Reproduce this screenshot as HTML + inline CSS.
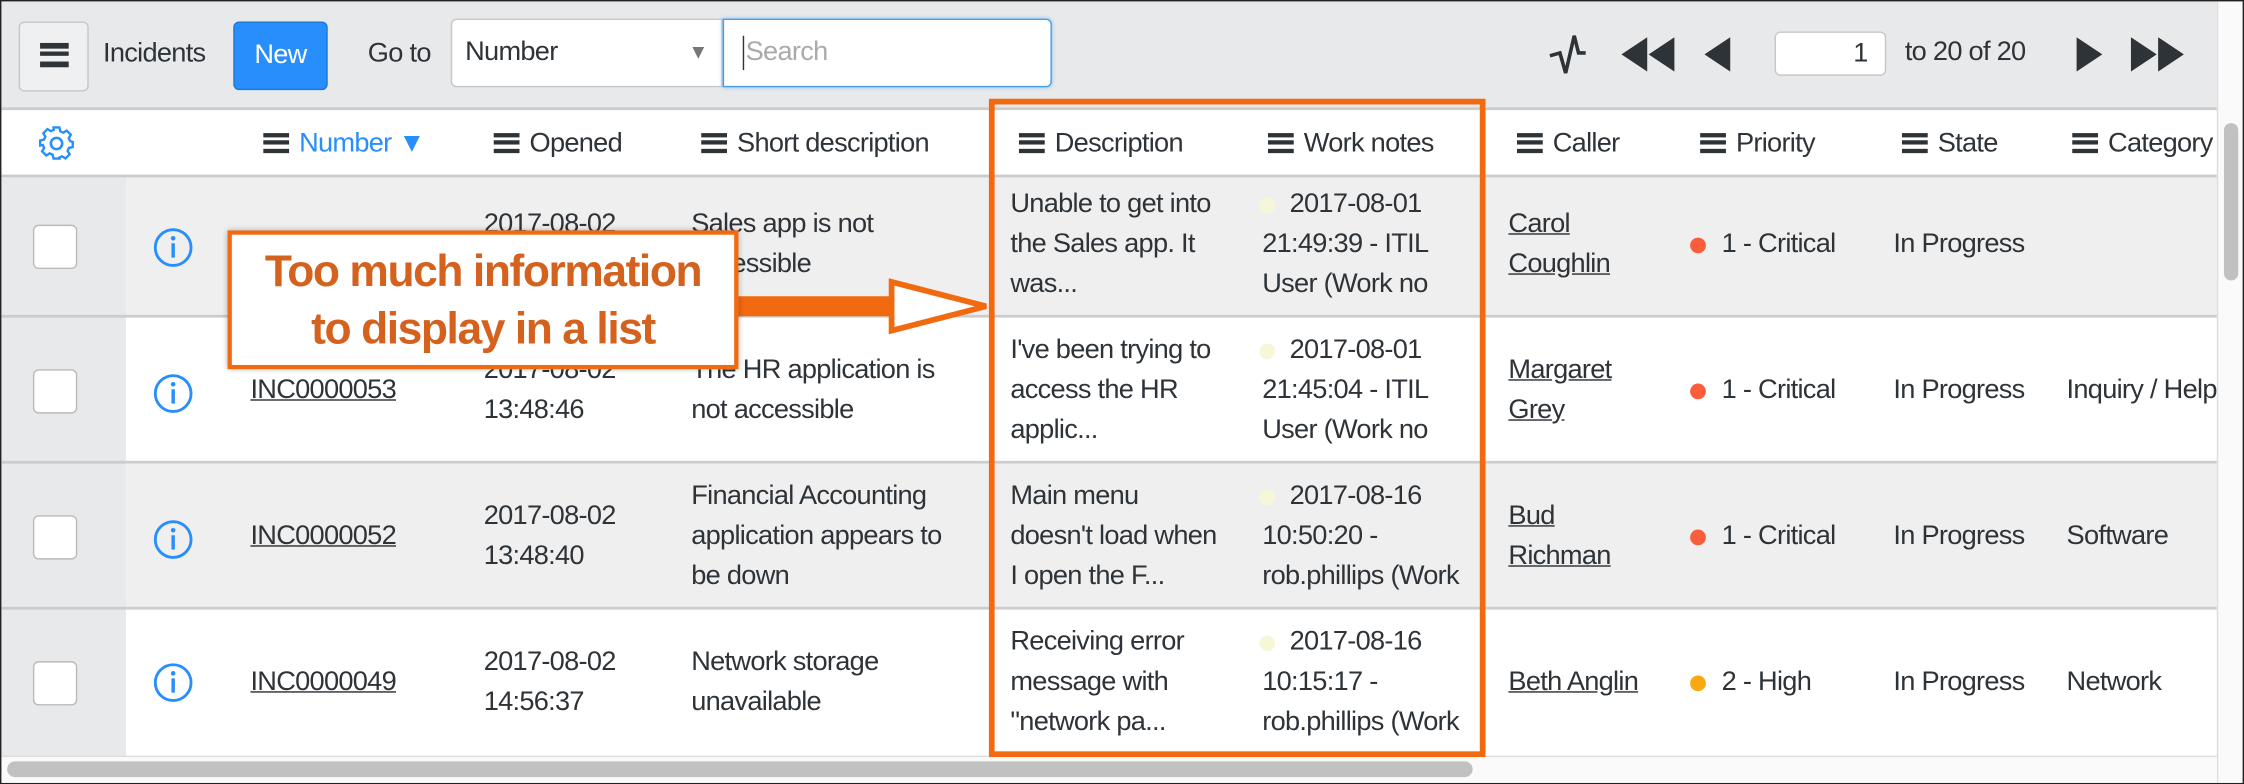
<!DOCTYPE html>
<html><head><meta charset="utf-8"><style>
html,body{margin:0;padding:0;width:2244px;height:784px;overflow:hidden;background:#fff}
#s{position:absolute;left:0;top:0;width:1568px;height:548px;transform:scale(1.43112);transform-origin:0 0;font-family:"Liberation Sans",sans-serif;color:#2e3338;font-size:19px;letter-spacing:-0.5px;overflow:hidden;border:1px solid #222;box-sizing:border-box}
.a{position:absolute;white-space:nowrap}
.u{text-decoration:underline}
.ham{display:inline-block;width:18px;height:14px;border-top:3.5px solid #2e3338;border-bottom:3.5px solid #2e3338;position:relative;box-sizing:border-box;margin-right:7px;vertical-align:-1px}
.ham:after{content:"";position:absolute;left:0;right:0;top:1.75px;height:3.5px;background:#2e3338}
.cb{position:absolute;left:22px;width:29px;height:29px;border:1px solid #bbb;border-radius:4px;background:#fff}
.ml{line-height:28px;white-space:normal}
.dot{position:absolute;width:11px;height:11px;border-radius:50%}
</style></head><body><div id="s">
<div class="a" style="left:0;top:0;width:1548px;height:74px;background:#e8e9eb;border-bottom:2px solid #ccc"></div>
<div class="a" style="left:12px;top:14px;width:47px;height:47px;border:1px solid #c5c7ca;border-radius:4px;background:#eef0f1"></div>
<div class="a" style="left:27px;top:29px"><span class="ham" style="width:20px;height:17px;border-width:4px"></span></div>
<div class="a" style="left:71px;top:26px">Incidents</div>
<div class="a" style="left:162px;top:14px;width:66px;height:48px;background:#278efc;border:1px solid #1f77d6;border-radius:4px;box-sizing:border-box;color:#fff;text-align:center;line-height:46px">New</div>
<div class="a" style="left:256px;top:26px">Go to</div>
<div class="a" style="left:314px;top:12px;width:190px;height:48px;background:#fff;border:1px solid #c5c7ca;border-radius:4px 0 0 4px;box-sizing:border-box"></div>
<div class="a" style="left:324px;top:25px">Number</div>
<div class="a" style="left:480px;top:27px;color:#777;font-size:14px">▼</div>
<div class="a" style="left:504px;top:12px;width:230px;height:48px;background:#fff;border:1px solid #4a9ee8;border-radius:0 4px 4px 0;box-sizing:border-box;box-shadow:0 0 3px #8cc1f0"></div>
<div class="a" style="left:518px;top:24px;width:1px;height:24px;background:#333"></div>
<div class="a" style="left:520px;top:25px;color:#aaa">Search</div>
<svg class="a" style="left:1080px;top:20px" width="36" height="34" viewBox="0 0 36 34"><path d="M2 18 L9 16 L13 30 L19 4 L22 16 L27 16" fill="none" stroke="#2e3338" stroke-width="2.5"/></svg>
<svg class="a" style="left:1132px;top:25px" width="100" height="24"><path d="M0 12 L18 0 V24Z M19 12 L37 0 V24Z M58 12 L76 0 V24Z" fill="#2e3338"/></svg>
<div class="a" style="left:1239px;top:21px;width:78px;height:31px;background:#fff;border:1px solid #c5c7ca;border-radius:4px;box-sizing:border-box;text-align:right;padding-right:12px;line-height:29px">1</div>
<div class="a" style="left:1330px;top:25px">to 20 of 20</div>
<svg class="a" style="left:1450px;top:25px" width="80" height="24"><path d="M0 0 L18 12 L0 24Z M38 0 L56 12 L38 24Z M57 0 L75 12 L57 24Z" fill="#2e3338"/></svg>
<!-- header -->
<div class="a" style="left:0;top:76px;width:1548px;height:45px;background:#fff;border-bottom:2px solid #ccc"></div>
<svg class="a" style="left:25px;top:86px" width="27" height="27" viewBox="0 0 24 24"><path d="M10 2h4l.6 2.6 2 .9 2.3-1.4 2.8 2.8-1.4 2.3.9 2L23 11.8v3.4l-2.6.6-.9 2 1.4 2.3-2.8 2.8-2.3-1.4-2 .9L14 23h-4l-.6-2.6-2-.9-2.3 1.4-2.8-2.8 1.4-2.3-.9-2L1 14.2v-3.4l2.6-.6.9-2L3.1 5.9 5.9 3.1l2.3 1.4 2-.9Z" transform="scale(.92) translate(1,0)" fill="none" stroke="#278efc" stroke-width="1.6"/><circle cx="12" cy="11.8" r="3.5" fill="none" stroke="#278efc" stroke-width="1.6"/></svg>
<div class="a" style="left:183px;top:89px;color:#278efc"><span class="ham" style="border-color:#2e3338"></span>Number ▼</div>
<div class="a" style="left:344px;top:89px"><span class="ham"></span>Opened</div>
<div class="a" style="left:489px;top:89px"><span class="ham"></span>Short description</div>
<div class="a" style="left:711px;top:89px"><span class="ham"></span>Description</div>
<div class="a" style="left:885px;top:89px"><span class="ham"></span>Work notes</div>
<div class="a" style="left:1059px;top:89px"><span class="ham"></span>Caller</div>
<div class="a" style="left:1187px;top:89px"><span class="ham"></span>Priority</div>
<div class="a" style="left:1328px;top:89px"><span class="ham"></span>State</div>
<div class="a" style="left:1447px;top:89px"><span class="ham"></span>Category</div>
<!-- rows -->
<div class="a" style="left:0;top:123px;width:1548px;height:96px;background:#efefef;border-bottom:2px solid #ccc"></div>
<div class="a" style="left:0;top:221px;width:1548px;height:100px;background:#fff;border-bottom:2px solid #ccc"></div>
<div class="a" style="left:0;top:323px;width:1548px;height:100px;background:#efefef;border-bottom:2px solid #ccc"></div>
<div class="a" style="left:0;top:425px;width:1548px;height:102px;background:#fff"></div>
<div class="a" style="left:0;top:123px;width:87px;height:404px;background:#e8e9eb"></div>
<div class="a" style="left:0;top:219px;width:87px;height:2px;background:#ccc"></div>
<div class="a" style="left:0;top:321px;width:87px;height:2px;background:#ccc"></div>
<div class="a" style="left:0;top:423px;width:87px;height:2px;background:#ccc"></div>

<div class="cb" style="top:156px"></div><div class="cb" style="top:257px"></div><div class="cb" style="top:359px"></div><div class="cb" style="top:461px"></div>
<svg class="a" style="left:106px;top:158px" width="28" height="320"><g fill="none" stroke="#278efc" stroke-width="2"><circle cx="14" cy="14" r="12.5"/><circle cx="14" cy="116" r="12.5"/><circle cx="14" cy="218" r="12.5"/></g><g fill="#278efc"><rect x="12.8" y="11" width="2.4" height="10"/><circle cx="14" cy="7.5" r="1.6"/><rect x="12.8" y="113" width="2.4" height="10"/><circle cx="14" cy="109.5" r="1.6"/><rect x="12.8" y="215" width="2.4" height="10"/><circle cx="14" cy="211.5" r="1.6"/></g></svg>
<svg class="a" style="left:106px;top:462px" width="28" height="28"><circle cx="14" cy="14" r="12.5" fill="none" stroke="#278efc" stroke-width="2"/><rect x="12.8" y="11" width="2.4" height="10" fill="#278efc"/><circle cx="14" cy="7.5" r="1.6" fill="#278efc"/></svg>

<div class="a u" style="left:174px;top:261px">INC0000053</div>
<div class="a u" style="left:174px;top:363px">INC0000052</div>
<div class="a u" style="left:174px;top:465px">INC0000049</div>

<div class="a ml" style="left:337px;top:142px">2017-08-02</div>
<div class="a ml" style="left:337px;top:244px">2017-08-02<br>13:48:46</div>
<div class="a ml" style="left:337px;top:346px">2017-08-02<br>13:48:40</div>
<div class="a ml" style="left:337px;top:448px">2017-08-02<br>14:56:37</div>
<div class="a ml" style="left:482px;top:142px">Sales app is not<br>accessible</div>
<div class="a ml" style="left:482px;top:244px">The HR application is<br>not accessible</div>
<div class="a ml" style="left:482px;top:332px">Financial Accounting<br>application appears to<br>be down</div>
<div class="a ml" style="left:482px;top:448px">Network storage<br>unavailable</div>

<div class="a ml" style="left:705px;top:128px">Unable to get into<br>the Sales app. It<br>was...</div>
<div class="a ml" style="left:705px;top:230px">I've been trying to<br>access the HR<br>applic...</div>
<div class="a ml" style="left:705px;top:332px">Main menu<br>doesn't load when<br>I open the F...</div>
<div class="a ml" style="left:705px;top:434px">Receiving error<br>message with<br>"network pa...</div>
<div class="dot" style="left:879px;top:137px;background:#f6f7d9"></div>
<div class="dot" style="left:879px;top:239px;background:#f6f7d9"></div>
<div class="dot" style="left:879px;top:341px;background:#f6f7d9"></div>
<div class="dot" style="left:879px;top:443px;background:#f6f7d9"></div>
<div class="a ml" style="left:881px;top:128px">&nbsp;&nbsp;&nbsp;&nbsp;2017-08-01<br>21:49:39 - ITIL<br>User (Work no</div>
<div class="a ml" style="left:881px;top:230px">&nbsp;&nbsp;&nbsp;&nbsp;2017-08-01<br>21:45:04 - ITIL<br>User (Work no</div>
<div class="a ml" style="left:881px;top:332px">&nbsp;&nbsp;&nbsp;&nbsp;2017-08-16<br>10:50:20 -<br>rob.phillips (Work</div>
<div class="a ml" style="left:881px;top:434px">&nbsp;&nbsp;&nbsp;&nbsp;2017-08-16<br>10:15:17 -<br>rob.phillips (Work</div>

<div class="a ml u" style="left:1053px;top:142px">Carol<br>Coughlin</div>
<div class="a ml u" style="left:1053px;top:244px">Margaret<br>Grey</div>
<div class="a ml u" style="left:1053px;top:346px">Bud<br>Richman</div>
<div class="a ml u" style="left:1053px;top:462px">Beth Anglin</div>
<div class="dot" style="left:1180px;top:165px;background:#f95d3c"></div>
<div class="dot" style="left:1180px;top:267px;background:#f95d3c"></div>
<div class="dot" style="left:1180px;top:369px;background:#f95d3c"></div>
<div class="dot" style="left:1180px;top:471px;background:#f8a912"></div>
<div class="a" style="left:1202px;top:159px">1 - Critical</div>
<div class="a" style="left:1202px;top:261px">1 - Critical</div>
<div class="a" style="left:1202px;top:363px">1 - Critical</div>
<div class="a" style="left:1202px;top:465px">2 - High</div>
<div class="a" style="left:1322px;top:159px">In Progress</div>
<div class="a" style="left:1322px;top:261px">In Progress</div>
<div class="a" style="left:1322px;top:363px">In Progress</div>
<div class="a" style="left:1322px;top:465px">In Progress</div>
<div class="a" style="left:1443px;top:261px">Inquiry / Help</div>
<div class="a" style="left:1443px;top:363px">Software</div>
<div class="a" style="left:1443px;top:465px">Network</div>

<!-- scrollbars -->
<div class="a" style="left:1548px;top:0;width:20px;height:548px;background:#fafafa;border-left:1px solid #ddd"></div>
<div class="a" style="left:1553px;top:85px;width:10px;height:110px;background:#c1c1c1;border-radius:5px"></div>
<div class="a" style="left:0;top:527px;width:1548px;height:21px;background:#fafafa;border-top:1px solid #ddd"></div>
<div class="a" style="left:4px;top:531px;width:1024px;height:11px;background:#c1c1c1;border-radius:6px"></div>

<!-- annotation -->
<div class="a" style="left:690px;top:68px;width:347px;height:460px;border:4px solid #f26a10;box-sizing:border-box"></div>
<svg class="a" style="left:512px;top:192px" width="180" height="42"><path d="M0 16 H110 V4 L176 21 L110 38 V26 H0Z" fill="#fff" stroke="#f26a10" stroke-width="4"/><rect x="0" y="17" width="112" height="8" fill="#f26a10"/></svg>
<div class="a" style="left:158px;top:160px;width:357px;height:97px;background:#fff;border:3px solid #f26a10;box-sizing:border-box;box-shadow:0 0 4px rgba(0,0,0,.3);text-align:center;color:#d4621e;font-weight:bold;font-size:31px;line-height:40px;padding-top:6px;letter-spacing:-1px">Too much information<br>to display in a list</div>
</div></body></html>
